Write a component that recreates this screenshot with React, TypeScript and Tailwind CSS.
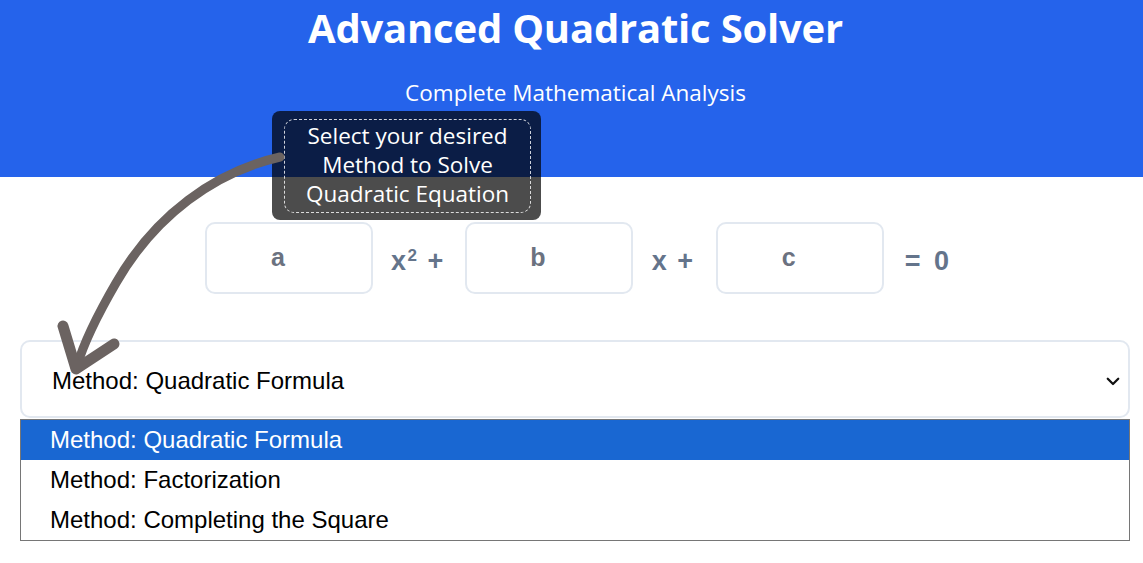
import React, { useState } from 'react';

const methods = [
  'Method: Quadratic Formula',
  'Method: Factorization',
  'Method: Completing the Square',
];

function CoefBox({ label }: { label: string }) {
  return (
    <div className="flex h-[72px] w-[168px] shrink-0 items-center justify-center rounded-[10px] border-2 border-[#e2e8f0] bg-white pr-[22px] text-[25px] font-bold tracking-normal text-[#6b7280]">
      {label}
    </div>
  );
}

export default function App() {
  const [selected, setSelected] = useState(0);

  return (
    <div className="relative h-[563px] w-full overflow-hidden bg-white font-['Liberation_Sans',Arial,sans-serif]">
      {/* Header */}
      <div className="flex h-[177px] flex-col items-center bg-[#2563eb] pl-[8px] text-white">
        <h1 className="mt-[2px] font-['Open_Sans',sans-serif] text-[40px] font-bold leading-[52px] tracking-[-0.2px]">
          Advanced Quadratic Solver
        </h1>
        <p className="mt-[24px] font-['Open_Sans',sans-serif] text-[22.5px] leading-[30px]">
          Complete Mathematical Analysis
        </p>
      </div>

      {/* Equation inputs */}
      <div className="mt-[45px] flex items-center justify-center pl-[14px] text-[27px] font-semibold tracking-[1.5px] text-[#64748b]">
        <CoefBox label="a" />
        <span className="ml-[18px] mr-[20px] pt-[6px]">
          x<sup className="text-[17px]">2</sup> +
        </span>
        <CoefBox label="b" />
        <span className="ml-[19px] mr-[21px] pt-[6px]">x +</span>
        <CoefBox label="c" />
        <span className="ml-[21px] pt-[6px] tracking-[3px]">= 0</span>
      </div>

      {/* Method select with open list */}
      <div className="ml-[20px] mr-[13px] mt-[46px]">
        <div className="flex h-[78px] items-center justify-between rounded-[10px] border-2 border-[#e2e8f0] pl-[30px] pr-[6px] pt-[3px] text-[24px] text-black">
          <span>{methods[selected]}</span>
          <svg width="18" height="18" viewBox="0 0 24 24" fill="none" stroke="#111" strokeWidth="3" strokeLinecap="round" strokeLinejoin="round">
            <path d="M5 9l7 7 7-7" />
          </svg>
        </div>
        <ul className="mt-px border border-[#767676] bg-white text-[24px]">
          {methods.map((m, i) => (
            <li
              key={m}
              onClick={() => setSelected(i)}
              className={
                i === selected
                  ? 'flex h-[40px] items-center bg-[#1967d2] pl-[29px] text-white'
                  : 'flex h-[40px] items-center pl-[29px] text-black'
              }
            >
              {m}
            </li>
          ))}
        </ul>
      </div>

      {/* Tooltip */}
      <div className="absolute left-[272px] top-[111px] h-[109px] w-[269px] rounded-[8px] bg-black/70 pb-[7px] pl-[12px] pr-[10px] pt-[8px]">
        <div className="flex h-full flex-col items-center justify-center rounded-[10px] border-[1.5px] border-dashed border-white/80 pb-[4px] font-['Open_Sans',sans-serif] text-[22.5px] leading-[29px] text-white">
          <span>Select your desired</span>
          <span>Method to Solve</span>
          <span>Quadratic Equation</span>
        </div>
      </div>

      {/* Pointer arrow */}
      <svg className="pointer-events-none absolute left-0 top-0" width="1143" height="563" viewBox="0 0 1143 563" fill="none">
        <path
          d="M280 157 C 215 172, 155 215, 116 283 C 98 314, 84 342, 77 366"
          stroke="#6b6361"
          strokeWidth="9"
          strokeLinecap="round"
        />
        <path d="M63 326 L76 369 L114 344" stroke="#6b6361" strokeWidth="11" strokeLinecap="round" strokeLinejoin="round" />
      </svg>
    </div>
  );
}
